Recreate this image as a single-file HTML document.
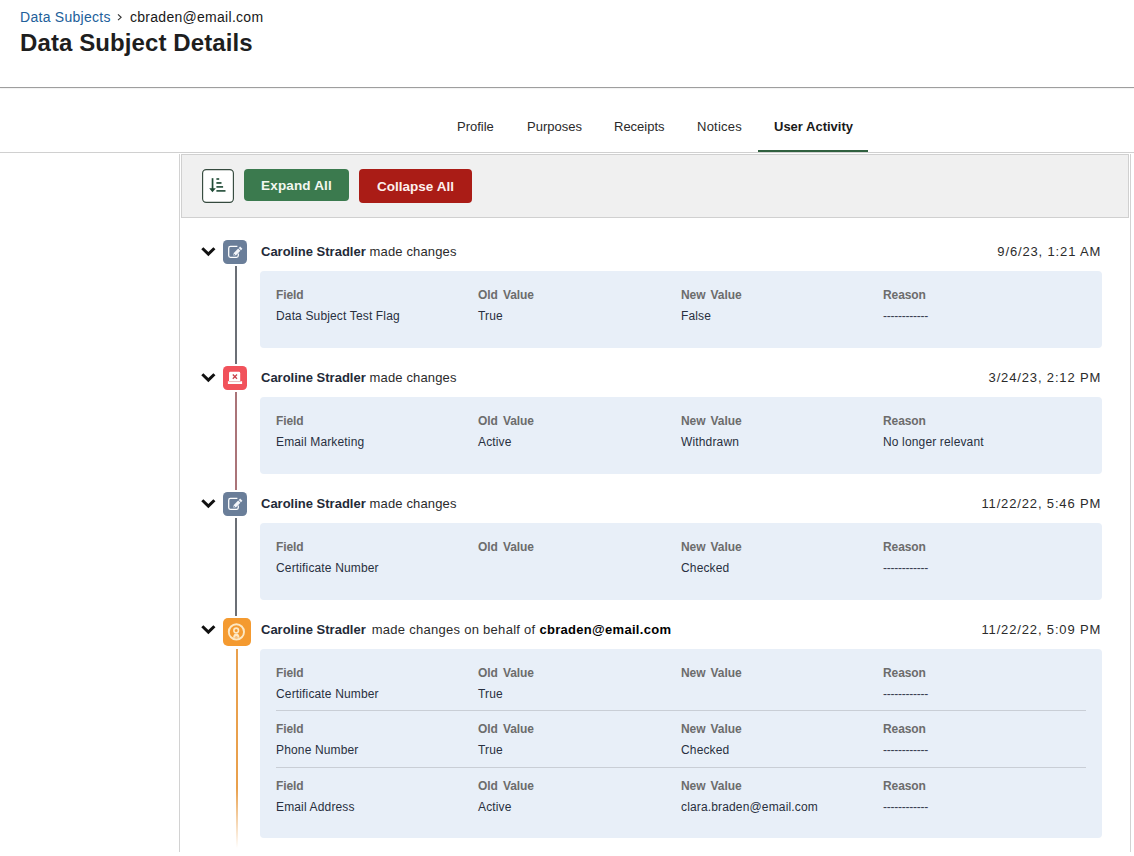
<!DOCTYPE html>
<html><head><meta charset="utf-8"><style>
*{box-sizing:border-box;margin:0;padding:0}
html,body{width:1134px;height:856px;overflow:hidden;background:#fff;font-family:"Liberation Sans",sans-serif;color:#181818}
.a{position:absolute}
svg{display:block}
#crumb,#crumb2{font-size:14px;line-height:16px;white-space:nowrap;color:#181818;letter-spacing:0.28px}
#crumb .lnk{color:#22609a}
#crumb .sep{color:#444}
#title{font-size:24px;font-weight:bold;line-height:28px;color:#1e1e1e;white-space:nowrap;letter-spacing:0.1px}
.tab{font-size:13px;line-height:15px;color:#2a2a2a;white-space:nowrap}
.btn{border-radius:4px;font-size:13.5px;font-weight:bold;color:#fff;text-align:center;white-space:nowrap}
.hdr{font-size:13px;line-height:15px;white-space:nowrap;color:#2b2b2b;letter-spacing:0.15px}
.hdr b{color:#232a38;letter-spacing:0}
.ts{font-size:13px;line-height:15px;white-space:nowrap;color:#2b2b2b;text-align:right;letter-spacing:0.85px}
.card{background:#e8eff8;border-radius:4px}
.lbl{font-size:12px;line-height:14px;font-weight:bold;color:#6c6c6c;white-space:nowrap;letter-spacing:-0.1px;word-spacing:2px}
.val{font-size:12px;line-height:14px;color:#283040;white-space:nowrap;letter-spacing:0.15px}
.div{height:1px;background:#c9ced6}
</style></head><body>
<div id="crumb" class="a" style="left:20px;top:9.4px"><span class="lnk">Data Subjects</span></div>
<svg class="a" style="left:116px;top:13px" width="8" height="10" viewBox="0 0 8 10"><path d="M2 1.4 L5.1 4.3 L2 7.2" fill="none" stroke="#333" stroke-width="1.15"/></svg>
<div id="crumb2" class="a" style="left:130px;top:9.4px">cbraden@email.com</div>
<div id="title" class="a" style="left:20px;top:29.1px">Data Subject Details</div>
<div class="a" style="left:0;top:87px;width:1134px;height:1px;background:#9e9e9e;box-shadow:0 1px 1px rgba(0,0,0,0.06)"></div>
<div class="a tab" style="left:457px;top:119.2px;">Profile</div>
<div class="a tab" style="left:527px;top:119.2px;">Purposes</div>
<div class="a tab" style="left:614px;top:119.2px;">Receipts</div>
<div class="a tab" style="left:697px;top:119.2px;letter-spacing:0.25px;">Notices</div>
<div class="a tab" style="left:774px;top:119.2px;font-weight:bold;color:#1a1a1a;">User Activity</div>
<div class="a" style="left:0;top:152px;width:1134px;height:1px;background:#d0d0d0"></div>
<div class="a" style="left:758px;top:150px;width:110px;height:2px;background:#30603f"></div>
<div class="a" style="left:179px;top:154px;width:952px;height:698px;border:1px solid #d2d2d2;border-top:0;border-bottom:0;background:#fff"></div>
<div class="a" style="left:181px;top:154px;width:948px;height:64px;background:#f0f0f0;border:1px solid #d0d0d0"></div>
<svg class="a" style="left:202px;top:169px" width="32" height="34" viewBox="0 0 32 34"><rect x="0.6" y="0.6" width="30.8" height="32.8" rx="3.6" fill="#fff" stroke="#354a3e" stroke-width="1.15"/><g fill="#1f4a35"><rect x="9.7" y="9.2" width="1.7" height="11"/><path d="M7.2 19.2 H13.8 L10.5 23.2 Z"/><rect x="14.4" y="9.2" width="2.8" height="1.6"/><rect x="14.4" y="13.1" width="5.1" height="1.7"/><rect x="14.4" y="17.1" width="6.7" height="1.6"/><rect x="14.4" y="21.1" width="9.1" height="1.6"/></g></svg>
<div class="a btn" style="left:244px;top:169px;width:105px;height:32px;background:#3b7a4e;line-height:34px;color:#f2f7f0;letter-spacing:0.15px">Expand All</div>
<div class="a btn" style="left:359px;top:169px;width:113px;height:33.5px;background:#aa1c16;line-height:36px;color:#fdf0ee">Collapse All</div>
<div class="a" style="left:200px;top:245px"><svg width="18" height="14" viewBox="0 0 18 14"><path d="M2.3 3.2 L8.35 9.1 L14.4 3.2" fill="none" stroke="#111" stroke-width="3"/></svg></div>
<div class="a" style="left:223px;top:240px"><svg width="24" height="24" viewBox="0 0 24 24"><rect width="24" height="24" rx="4.5" fill="#6a7e99"/>
<path d="M14.4 6.4 H7.5 Q5.7 6.4 5.7 8.2 V15.6 Q5.7 17.4 7.5 17.4 H13.5 Q15.3 17.4 15.3 15.6 V13.6" fill="none" stroke="#fff" stroke-width="1.25"/>
<path d="M10.3 15.6 L10.75 13.0 L15.2 8.55 L17.45 10.8 L13.0 15.25 Z" fill="#f4f6fa"/>
<path d="M15.75 8.0 L17.15 6.6 L19.4 8.85 L18.0 10.25 Z" fill="#f4f6fa"/>
<circle cx="11.4" cy="14.5" r="0.55" fill="#6a7e99"/></svg></div>
<div class="a hdr" style="left:261px;top:244.2px"><b>Caroline Stradler</b> made changes</div>
<div class="a ts" style="left:900px;width:201.2px;top:244.2px">9/6/23, 1:21 AM</div>
<div class="a card" style="left:260px;top:271px;width:842px;height:77px"></div>
<div class="a lbl" style="left:276px;top:288.0px">Field</div>
<div class="a val" style="left:276px;top:309.0px">Data Subject Test Flag</div>
<div class="a lbl" style="left:478px;top:288.0px">Old Value</div>
<div class="a val" style="left:478px;top:309.0px">True</div>
<div class="a lbl" style="left:681px;top:288.0px">New Value</div>
<div class="a val" style="left:681px;top:309.0px">False</div>
<div class="a lbl" style="left:883px;top:288.0px">Reason</div>
<div class="a val" style="left:883px;top:309.0px"><span style="letter-spacing:-0.25px;color:#3a4050">------------</span></div>
<div class="a" style="left:235px;top:266px;width:2px;height:98px;background:#6b6f76"></div>
<div class="a" style="left:200px;top:371px"><svg width="18" height="14" viewBox="0 0 18 14"><path d="M2.3 3.2 L8.35 9.1 L14.4 3.2" fill="none" stroke="#111" stroke-width="3"/></svg></div>
<div class="a" style="left:223px;top:366px"><svg width="24" height="24" viewBox="0 0 24 24"><rect width="24" height="24" rx="4.5" fill="#f1525b"/>
<path d="M6 15.3 V7.2 Q6 5.8 7.4 5.8 H15.8 Q17.2 5.8 17.2 7.2 V15.3 Z" fill="#fff"/><rect x="4.9" y="15.1" width="14.2" height="2.9" fill="#fff"/>
<line x1="5.6" y1="15.55" x2="18.4" y2="15.55" stroke="#d99a9e" stroke-width="0.6"/>
<path d="M9.8 8.5 L14.0 12.7 M14.0 8.5 L9.8 12.7" stroke="#c9434c" stroke-width="1.3"/></svg></div>
<div class="a hdr" style="left:261px;top:370.2px"><b>Caroline Stradler</b> made changes</div>
<div class="a ts" style="left:900px;width:201.2px;top:370.2px">3/24/23, 2:12 PM</div>
<div class="a card" style="left:260px;top:397px;width:842px;height:77px"></div>
<div class="a lbl" style="left:276px;top:414.0px">Field</div>
<div class="a val" style="left:276px;top:435.0px">Email Marketing</div>
<div class="a lbl" style="left:478px;top:414.0px">Old Value</div>
<div class="a val" style="left:478px;top:435.0px">Active</div>
<div class="a lbl" style="left:681px;top:414.0px">New Value</div>
<div class="a val" style="left:681px;top:435.0px">Withdrawn</div>
<div class="a lbl" style="left:883px;top:414.0px">Reason</div>
<div class="a val" style="left:883px;top:435.0px">No longer relevant</div>
<div class="a" style="left:235px;top:392px;width:2px;height:98px;background:#aa7479"></div>
<div class="a" style="left:200px;top:497px"><svg width="18" height="14" viewBox="0 0 18 14"><path d="M2.3 3.2 L8.35 9.1 L14.4 3.2" fill="none" stroke="#111" stroke-width="3"/></svg></div>
<div class="a" style="left:223px;top:492px"><svg width="24" height="24" viewBox="0 0 24 24"><rect width="24" height="24" rx="4.5" fill="#6a7e99"/>
<path d="M14.4 6.4 H7.5 Q5.7 6.4 5.7 8.2 V15.6 Q5.7 17.4 7.5 17.4 H13.5 Q15.3 17.4 15.3 15.6 V13.6" fill="none" stroke="#fff" stroke-width="1.25"/>
<path d="M10.3 15.6 L10.75 13.0 L15.2 8.55 L17.45 10.8 L13.0 15.25 Z" fill="#f4f6fa"/>
<path d="M15.75 8.0 L17.15 6.6 L19.4 8.85 L18.0 10.25 Z" fill="#f4f6fa"/>
<circle cx="11.4" cy="14.5" r="0.55" fill="#6a7e99"/></svg></div>
<div class="a hdr" style="left:261px;top:496.2px"><b>Caroline Stradler</b> made changes</div>
<div class="a ts" style="left:900px;width:201.2px;top:496.2px">11/22/22, 5:46 PM</div>
<div class="a card" style="left:260px;top:523px;width:842px;height:77px"></div>
<div class="a lbl" style="left:276px;top:540.0px">Field</div>
<div class="a val" style="left:276px;top:561.0px">Certificate Number</div>
<div class="a lbl" style="left:478px;top:540.0px">Old Value</div>
<div class="a lbl" style="left:681px;top:540.0px">New Value</div>
<div class="a val" style="left:681px;top:561.0px">Checked</div>
<div class="a lbl" style="left:883px;top:540.0px">Reason</div>
<div class="a val" style="left:883px;top:561.0px"><span style="letter-spacing:-0.25px;color:#3a4050">------------</span></div>
<div class="a" style="left:235px;top:518px;width:2px;height:98px;background:#6b6f76"></div>
<div class="a" style="left:200px;top:623px"><svg width="18" height="14" viewBox="0 0 18 14"><path d="M2.3 3.2 L8.35 9.1 L14.4 3.2" fill="none" stroke="#111" stroke-width="3"/></svg></div>
<div class="a" style="left:223px;top:618px"><svg width="28" height="28" viewBox="0 0 28 28"><rect width="28" height="28" rx="5" fill="#f49a30"/>
<circle cx="13.4" cy="13.9" r="7.6" fill="none" stroke="#fde8c4" stroke-width="1.9"/>
<circle cx="13.2" cy="12.4" r="2.3" fill="none" stroke="#fde8c4" stroke-width="1.6"/>
<path d="M10.1 19.8 Q10.4 15.6 13.3 15.6 Q16.2 15.6 16.5 19.8 Z" fill="#fde8c4"/>
<path d="M11.8 19.6 Q12.2 18.2 13.3 18.2 Q14.4 18.2 14.8 19.6 Z" fill="#f0a860"/></svg></div>
<div class="a hdr" style="left:261px;top:622.2px"><b>Caroline Stradler</b><span style="margin-left:2px;letter-spacing:0.28px"> made changes on behalf of </span><b style="color:#000;letter-spacing:0.3px">cbraden@email.com</b></div>
<div class="a ts" style="left:900px;width:201.2px;top:622.2px">11/22/22, 5:09 PM</div>
<div class="a card" style="left:260px;top:649px;width:842px;height:189px"></div>
<div class="a lbl" style="left:276px;top:666.0px">Field</div>
<div class="a val" style="left:276px;top:687.0px">Certificate Number</div>
<div class="a lbl" style="left:478px;top:666.0px">Old Value</div>
<div class="a val" style="left:478px;top:687.0px">True</div>
<div class="a lbl" style="left:681px;top:666.0px">New Value</div>
<div class="a lbl" style="left:883px;top:666.0px">Reason</div>
<div class="a val" style="left:883px;top:687.0px"><span style="letter-spacing:-0.25px;color:#3a4050">------------</span></div>
<div class="a div" style="left:276px;top:710px;width:810px"></div>
<div class="a lbl" style="left:276px;top:722.0px">Field</div>
<div class="a val" style="left:276px;top:743.0px">Phone Number</div>
<div class="a lbl" style="left:478px;top:722.0px">Old Value</div>
<div class="a val" style="left:478px;top:743.0px">True</div>
<div class="a lbl" style="left:681px;top:722.0px">New Value</div>
<div class="a val" style="left:681px;top:743.0px">Checked</div>
<div class="a lbl" style="left:883px;top:722.0px">Reason</div>
<div class="a val" style="left:883px;top:743.0px"><span style="letter-spacing:-0.25px;color:#3a4050">------------</span></div>
<div class="a div" style="left:276px;top:767px;width:810px"></div>
<div class="a lbl" style="left:276px;top:779.0px">Field</div>
<div class="a val" style="left:276px;top:800.0px">Email Address</div>
<div class="a lbl" style="left:478px;top:779.0px">Old Value</div>
<div class="a val" style="left:478px;top:800.0px">Active</div>
<div class="a lbl" style="left:681px;top:779.0px">New Value</div>
<div class="a val" style="left:681px;top:800.0px">clara.braden@email.com</div>
<div class="a lbl" style="left:883px;top:779.0px">Reason</div>
<div class="a val" style="left:883px;top:800.0px"><span style="letter-spacing:-0.25px;color:#3a4050">------------</span></div>
<div class="a" style="left:236px;top:649px;width:2px;height:199px;background:linear-gradient(#e9a04c 0%,#e9a04c 70%,rgba(233,160,76,0) 100%)"></div>
</body></html>
